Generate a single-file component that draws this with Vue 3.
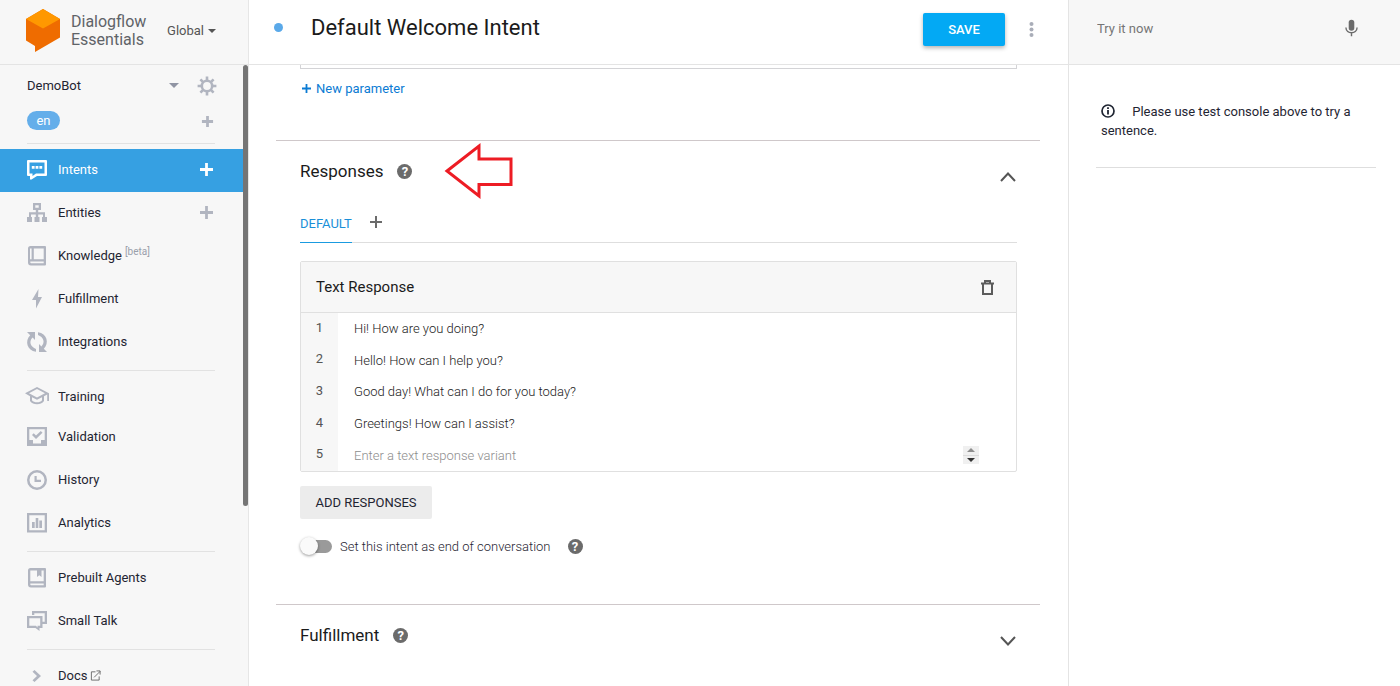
<template>
  <div class="app">
    <aside class="sidebar">
      <header class="brand">
        <svg class="brand-logo" viewBox="0 0 34 43" aria-hidden="true">
          <path d="M17 0 L34 10 V28.500 L9 43 V37 L0 31.500 V10 Z" fill="#ef6c00" />
          <path d="M17 0 L34 10 L17 19.500 L0 10 Z" fill="#ff9800" />
        </svg>
        <div class="brand-name">Dialogflow<br />Essentials</div>
        <button class="region" type="button">
          Global
          <span class="caret"></span>
        </button>
      </header>

      <div class="sidebar-body">
        <div class="agent-row">
          <select v-model="agent" class="agent-select" aria-label="Agent">
            <option>DemoBot</option>
          </select>
          <span class="caret agent-caret"></span>
          <button class="icon-btn" type="button" aria-label="Agent settings">
            <svg class="icon" viewBox="0 0 20 20" fill="none" stroke="currentColor">
              <circle cx="10" cy="10" r="5.200" stroke-width="2.600" />
              <path
                d="M10 4.500V.6M10 15.500v3.900M4.500 10H.6M15.500 10h3.900M6 6 3.400 3.400M14 6l2.600-2.600M6 14l-2.600 2.600M14 14l2.600 2.600"
                stroke-width="2.600"
              />
            </svg>
          </button>
        </div>

        <div class="lang-row">
          <button class="lang" type="button">en</button>
          <button class="icon-btn" type="button" aria-label="Add language">
            <svg class="plus" viewBox="0 0 14 14"><path d="M7 1v12M1 7h12" /></svg>
          </button>
        </div>

        <nav>
          <ul v-for="(group, i) in groups" :key="i" class="nav-group">
            <li
              v-for="item in group"
              :key="item.label"
              class="nav-item"
              :class="{ active: item.label === current, short: item.short }"
            >
              <a href="#" class="nav-link" @click.prevent="current = item.label">
                <svg class="icon" viewBox="0 0 20 20" aria-hidden="true">
                  <path :d="item.icon" fill="currentColor" fill-rule="evenodd" />
                </svg>
                <span>{{ item.label }}<sup v-if="item.tag">{{ item.tag }}</sup></span>
                <svg v-if="item.external" class="external" viewBox="0 0 12 12" aria-hidden="true">
                  <path d="M6 2H1.500v9H10V7M4.500 8 11 1.500M7 1h4v4" />
                </svg>
              </a>
              <button v-if="item.add" class="icon-btn" type="button" :aria-label="`Create ${item.label}`">
                <svg class="plus" viewBox="0 0 14 14"><path d="M7 0v14M0 7h14" /></svg>
              </button>
            </li>
          </ul>
        </nav>
        <div class="scroll-thumb"></div>
      </div>
    </aside>

    <main class="main">
      <header class="intent-header">
        <div class="intent-title">
          <span class="status-dot"></span>
          <input v-model="intentName" class="intent-name" type="text" aria-label="Intent name" />
        </div>
        <button class="save-btn" type="button">SAVE</button>
        <button class="more-btn" type="button" aria-label="More options">
          <svg viewBox="0 0 4 15"><circle cx="2" cy="2" r="2" /><circle cx="2" cy="7.500" r="2" /><circle cx="2" cy="13" r="2" /></svg>
        </button>
      </header>

      <div class="content">
        <section class="parameters">
          <div class="param-table"></div>
          <a href="#" class="new-param" @click.prevent>
            <svg viewBox="0 0 10 10"><path d="M5 0v10M0 5h10" /></svg>
            New parameter
          </a>
        </section>

        <section class="panel responses">
          <div class="panel-head">
            <h2>Responses</h2>
            <span class="help">?</span>
            <svg class="arrow" viewBox="0 0 68 54" aria-hidden="true">
              <path d="M2 27 L34 2 V15 H66 V40.500 H34 V52 Z" />
            </svg>
            <button class="chevron" type="button" aria-label="Collapse responses">
              <svg viewBox="0 0 16 10"><path d="M1 9 8 1.500 15 9" /></svg>
            </button>
          </div>

          <div class="tabs">
            <button class="tab" type="button">DEFAULT</button>
            <button class="add-tab" type="button" aria-label="Add tab">
              <svg viewBox="0 0 12 12"><path d="M6 0v12M0 6h12" /></svg>
            </button>
          </div>

          <div class="card">
            <div class="card-head">
              <h3>Text Response</h3>
              <button class="trash" type="button" aria-label="Delete response">
                <svg viewBox="0 0 13 15"><path d="M2 3.500v10.500h9V3.500M0 3.500h13M4 3V1h5v2" /></svg>
              </button>
            </div>
            <ol class="variants">
              <li v-for="(text, i) in variants" :key="i" class="variant">
                <span class="num">{{ i + 1 }}</span>
                <input
                  v-model="variants[i]"
                  type="text"
                  :aria-label="`Response variant ${i + 1}`"
                  placeholder="Enter a text response variant"
                />
                <span v-if="i === variants.length - 1" class="stepper">
                  <button type="button" aria-label="Scroll up"><span class="tri up"></span></button>
                  <button type="button" aria-label="Scroll down"><span class="tri down"></span></button>
                </span>
              </li>
            </ol>
          </div>

          <button class="add-btn" type="button">ADD RESPONSES</button>

          <div class="end-row">
            <input id="end-toggle" v-model="endOfConversation" class="toggle" type="checkbox" />
            <label for="end-toggle">Set this intent as end of conversation</label>
            <span class="help">?</span>
          </div>
        </section>

        <section class="panel">
          <div class="panel-head">
            <h2>Fulfillment</h2>
            <span class="help">?</span>
            <button class="chevron" type="button" aria-label="Expand fulfillment">
              <svg viewBox="0 0 16 10"><path d="M1 1 8 8.500 15 1" /></svg>
            </button>
          </div>
        </section>
      </div>
    </main>

    <aside class="console">
      <header class="console-header">
        <input v-model="query" type="text" placeholder="Try it now" aria-label="Try it now" />
        <button class="mic" type="button" aria-label="Speak">
          <svg viewBox="0 0 14 18">
            <rect x="4" y="0" width="6" height="12" rx="3" fill="currentColor" />
            <path d="M1 8.500c0 7.400 12 7.400 12 0M7 14v4" fill="none" stroke="currentColor" stroke-width="1.500" />
          </svg>
        </button>
      </header>
      <p class="console-note">
        <svg viewBox="0 0 14 14" aria-hidden="true">
          <circle cx="7" cy="7" r="6" fill="none" stroke="currentColor" stroke-width="1.700" />
          <path d="M7 3.200v1.800M7 6v4.600" stroke="currentColor" stroke-width="1.800" />
        </svg>
        Please use test console above to try a sentence.
      </p>
    </aside>
  </div>
</template>

<script setup>
import { ref } from 'vue'

const agent = ref('DemoBot')
const current = ref('Intents')
const intentName = ref('Default Welcome Intent')
const endOfConversation = ref(false)
const query = ref('')

const variants = ref([
  'Hi! How are you doing?',
  'Hello! How can I help you?',
  'Good day! What can I do for you today?',
  'Greetings! How can I assist?',
  ''
])

const groups = [
  [
    {
      label: 'Intents',
      add: true,
      icon: 'M1 0H19Q20 0 20 1V15Q20 16 19 16H10L4.500 19.500H3V16H1Q0 16 0 15V1Q0 0 1 0ZM2.500 2.500V13.500H5.500V16L9 13.500H17.500V2.500ZM4.800 6H7.600V8.800H4.800ZM8.600 6H11.400V8.800H8.600ZM12.400 6H15.200V8.800H12.400Z'
    },
    {
      label: 'Entities',
      add: true,
      icon: 'M6 0H14V7H11.200V9.200H18V14H20V19H15V14H16V11.500H11.200V14H12.500V19H7.500V14H8.800V11.500H4V14H5V19H0V14H2V9.200H8.800V7H6ZM8.300 2.300V4.700H11.700V2.300Z'
    },
    {
      label: 'Knowledge',
      tag: '[beta]',
      icon: 'M3.500 0H18Q19 0 19 1V18.500Q19 19.500 18 19.500H4Q1 19.500 1 16.500V2.500Q1 0 3.500 0ZM3 2.500V13.300H4.600V2.500ZM6.800 2.500V13.300H16.700V2.500ZM3.300 15.500V16.300Q3.300 17.200 4.200 17.200H16.700V15.500Z'
    },
    { label: 'Fulfillment', icon: 'M11.500 0 5 11H9V19.500L15 8H11Z' },
    {
      label: 'Integrations',
      icon: 'M0 0H8V8L5.600 5.600C1.500 9.500 3.500 15 9 17V19.700C0 18.500-2.500 9 3.200 3.200ZM11 .3C20 1.500 22.500 11 16.800 16.800L20 20H12V12L14.400 14.400C18.500 10.500 16.500 5 11 3Z'
    }
  ],
  [
    {
      label: 'Training',
      short: true,
      icon: 'M10 1 22 7.300V15H20.200V8.500L17 10.200V15C14 19.300 6 19.300 3 15V10.200L-2 7.300ZM10 3 2 7.300 10 11.500 18 7.300ZM5 11.200V14.300C7 17 13 17 15 14.300V11.200L10 13.700Z'
    },
    {
      label: 'Validation',
      icon: 'M0 0H20V19H0ZM2.300 2.300V13H6V16.500H14V13H17.700V2.300ZM5 8 6.700 6.300 9 8.600 13.800 4 15.500 5.700 9 12Z'
    },
    {
      label: 'History',
      icon: 'M10 0A10 10 0 1 1 10 20A10 10 0 1 1 10 0ZM10 2.500A7.500 7.500 0 1 0 10 17.500A7.500 7.500 0 1 0 10 2.500ZM7.500 6H9.700V9.800H14V12H7.500Z'
    },
    {
      label: 'Analytics',
      icon: 'M0 0H20V19.500H0ZM2.300 2.300V17.200H17.700V2.300ZM5 9H7.700V15H5ZM8.700 5H11.300V15H8.700ZM12.300 7.500H15V15H12.300Z'
    }
  ],
  [
    {
      label: 'Prebuilt Agents',
      icon: 'M3.500 0H18Q19 0 19 1V18.500Q19 19.500 18 19.500H4Q1 19.500 1 16.500V2.500Q1 0 3.500 0ZM3.300 2.500V13.300H16.700V2.500H14.500V9L12.300 7.300 10 9V2.500ZM3.300 15.500V16.300Q3.300 17.200 4.200 17.200H16.700V15.500Z'
    },
    {
      label: 'Small Talk',
      icon: 'M5 0H20V13H15.500V10.700H17.700V2.300H7.300V4H5ZM0 5H15.500V17H12.500V20L8.500 17H0ZM2.300 7.300V14.700H9L10.500 16.500V14.700H13.200V7.300Z'
    }
  ],
  [
    {
      label: 'Docs',
      external: true,
      icon: 'M5.500 5.800 7.500 4 14 10 7.500 16 5.500 14.200 10 10Z'
    }
  ]
]
</script>

<style>
body {
  margin: 0;
  background: #fff;
}
</style>

<style scoped>
.app {
  display: flex;
  height: 100vh;
  overflow: hidden;
  font-family: Roboto, 'Liberation Sans', sans-serif;
  font-size: 13px;
  color: #1f2532;
}

.app * {
  box-sizing: border-box;
}

button,
input,
select {
  margin: 0;
  padding: 0;
  border: 0;
  outline: 0;
  background: none;
  font: inherit;
  color: inherit;
}

button {
  cursor: pointer;
}

svg {
  display: block;
  flex: none;
  overflow: visible;
}

a {
  color: inherit;
  text-decoration: none;
}

h2,
h3 {
  margin: 0;
  font-weight: 400;
}

/* sidebar */
.sidebar {
  display: flex;
  flex-direction: column;
  flex: 0 0 249px;
  border-right: 1px solid #e6e6e6;
  background: #f7f7f7;
}

.brand {
  display: flex;
  align-items: center;
  flex: none;
  height: 65px;
  padding: 0 32px 3px 26px;
  border-bottom: 1px solid #e4e4e4;
}

.brand-logo {
  width: 34px;
  height: 43px;
}

.brand-name {
  flex: 1;
  margin-left: 11px;
  font-size: 16px;
  line-height: 18px;
  color: #5f6368;
}

.region {
  display: flex;
  align-items: center;
  gap: 4px;
  color: #555;
}

.caret {
  border: 4px solid transparent;
  border-top-color: #555;
  border-bottom: 0;
}

.sidebar-body {
  position: relative;
  flex: 1;
  min-height: 0;
  padding-top: 2px;
  overflow: hidden;
}

.scroll-thumb {
  position: absolute;
  top: 0;
  right: 0;
  width: 5px;
  height: 71%;
  border-radius: 3px;
  background: #757575;
}

.agent-row,
.lang-row {
  display: flex;
  align-items: center;
  height: 37px;
  padding: 0 31px 0 27px;
}

.agent-select {
  flex: 1;
  appearance: none;
}

.agent-caret {
  margin-right: 18px;
  border-width: 5px;
  border-bottom: 0;
  border-top-color: #9094a3;
}

.icon-btn {
  display: flex;
  justify-content: center;
  width: 20px;
  color: #b1b5c0;
}

.icon {
  width: 20px;
  height: 20px;
}

.plus {
  width: 13px;
  height: 13px;
  fill: none;
  stroke: currentColor;
  stroke-width: 3;
}

.lang-row {
  justify-content: space-between;
  height: 39px;
  padding-bottom: 4px;
}

.lang {
  width: 33px;
  height: 19px;
  margin-bottom: 2px;
  border-radius: 10px;
  background: #64aeea;
  color: #fff;
}

.nav-group {
  margin: 0;
  padding: 0;
  list-style: none;
}

.nav-group::before {
  content: '';
  display: block;
  margin: 6px 33px 5px 27px;
  border-top: 1px solid #e2e2e2;
}

.nav-group:first-child::before {
  margin-top: 0;
}

.nav-item {
  display: flex;
  align-items: center;
  height: 43px;
  padding: 0 32px 2px 27px;
}

.nav-item.short {
  height: 40px;
  padding-bottom: 0;
}

.nav-item.active {
  background: #36a0e2;
  color: #fff;
}

.nav-link {
  display: flex;
  align-items: center;
  flex: 1;
}

.nav-link .icon {
  margin-right: 11px;
  color: #b1b5c0;
}

.active .icon,
.active .icon-btn {
  color: #fff;
}

sup {
  margin-left: 3px;
  font-size: 10px;
  line-height: 1;
  color: #9aa0ab;
}

.external {
  width: 11px;
  height: 11px;
  margin-left: 3px;
  fill: none;
  stroke: #666;
}

/* intent editor */
.main {
  display: flex;
  flex-direction: column;
  flex: 1;
  min-width: 0;
}

.intent-header {
  display: flex;
  align-items: center;
  flex: none;
  height: 65px;
  padding: 0 34px 6px 25px;
  border-bottom: 1px solid #e4e4e4;
}

.intent-title {
  display: flex;
  align-items: center;
  flex: 1;
  min-width: 0;
  padding-bottom: 4px;
}

.status-dot {
  width: 9px;
  height: 9px;
  border-radius: 50%;
  background: #5aa9e9;
}

.intent-name {
  flex: 1;
  min-width: 0;
  margin-left: 28px;
  font-size: 22px;
  color: #1b1b1b;
}

.save-btn {
  width: 82px;
  height: 33px;
  border-radius: 2px;
  background: #03a9f4;
  box-shadow: 0 2px 4px rgba(0, 0, 0, 0.3);
  color: #fff;
  font-weight: 500;
}

.more-btn {
  margin-left: 24px;
}

.more-btn svg {
  width: 5px;
  height: 15px;
  fill: #a9adb8;
}

.content {
  flex: 1;
  min-height: 0;
  padding: 0 28px 0 27px;
  overflow: hidden;
}

.parameters {
  padding: 0 23px 33px 24px;
}

.param-table {
  height: 4px;
  border: 1px solid #d3d3d6;
  border-top: 0;
}

.new-param {
  display: inline-flex;
  align-items: center;
  gap: 5px;
  height: 38px;
  padding-left: 2px;
  color: #0b7bd3;
}

.new-param svg {
  width: 9px;
  height: 9px;
  fill: none;
  stroke: currentColor;
  stroke-width: 2;
}

.panel {
  padding: 0 23px 0 24px;
  border-top: 1px solid #cfc8ca;
}

.responses {
  padding-bottom: 48px;
}

.panel-head {
  display: flex;
  align-items: center;
  height: 60px;
}

h2 {
  font-size: 17px;
  color: #1b1b1b;
}

.help {
  display: flex;
  align-items: center;
  justify-content: center;
  width: 15px;
  height: 15px;
  margin-left: 14px;
  border-radius: 50%;
  background: #6b6b6b;
  color: #fff;
  font-size: 13px;
  font-weight: 700;
}

.arrow {
  width: 68px;
  height: 54px;
  margin-left: 33px;
  fill: none;
  stroke: #ed1c24;
  stroke-width: 3;
}

.chevron {
  margin-right: 1px;
  margin-left: auto;
  padding-top: 12px;
}

.chevron svg {
  width: 16px;
  height: 10px;
  fill: none;
  stroke: #555;
  stroke-width: 2;
}

.tabs {
  display: flex;
  height: 42px;
  border-bottom: 1px solid #dedede;
}

.tab {
  height: 42px;
  padding-top: 4px;
  border-bottom: 1px solid #1a9be0;
  color: #1a8fd8;
}

.add-tab {
  margin-left: 18px;
}

.add-tab svg {
  width: 12px;
  height: 12px;
  fill: none;
  stroke: #6b6b6b;
  stroke-width: 2;
}

.card {
  margin-top: 18px;
  border: 1px solid #e0e0e0;
  border-radius: 2px;
}

.card-head {
  display: flex;
  align-items: center;
  justify-content: space-between;
  height: 51px;
  padding: 0 22px 0 15px;
  border-bottom: 1px solid #e0e0e0;
  background: #f7f7f7;
}

h3 {
  font-size: 15px;
  color: #1b1b1b;
}

.trash svg {
  width: 13px;
  height: 15px;
  fill: none;
  stroke: #5c5c5c;
  stroke-width: 2;
}

.variants {
  display: grid;
  grid-auto-rows: 1fr;
  min-height: 158px;
  margin: 0;
  padding: 0;
  list-style: none;
}

.variant {
  display: flex;
  align-items: stretch;
  padding-right: 37px;
}

.num {
  display: flex;
  align-items: center;
  justify-content: center;
  width: 37px;
  padding-bottom: 3px;
  background: #f7f7f7;
  color: #555;
}

.variant input {
  flex: 1;
  min-width: 0;
  margin-left: 16px;
  font-weight: 300;
  color: #222;
}

.variant input::placeholder {
  color: #8d8d8d;
  opacity: 1;
}

.stepper {
  display: flex;
  flex-direction: column;
  align-self: center;
  width: 16px;
  height: 18px;
  background: #f0f0f0;
}

.stepper button {
  display: flex;
  align-items: center;
  justify-content: center;
  flex: 1;
}

.stepper button + button {
  border-top: 1px solid #dcdcdc;
}

.tri {
  border: 4px solid transparent;
}

.tri.up {
  border-top: 0;
  border-bottom-color: #8e8e8e;
}

.tri.down {
  border-bottom: 0;
  border-top-color: #333;
}

.add-btn {
  display: block;
  width: 132px;
  height: 33px;
  margin-top: 14px;
  border-radius: 2px;
  background: #ececec;
}

.end-row {
  display: flex;
  align-items: center;
  margin-top: 17px;
  font-weight: 300;
}

.end-row label {
  margin-left: 8px;
}

.end-row .help {
  margin-left: 17px;
}

.toggle {
  position: relative;
  width: 32px;
  height: 20px;
  appearance: none;
  cursor: pointer;
}

.toggle::before {
  content: '';
  position: absolute;
  inset: 4px 0 3px 4px;
  border-radius: 7px;
  background: #9a9a9a;
}

.toggle::after {
  content: '';
  position: absolute;
  top: 1px;
  left: 0;
  width: 18px;
  height: 18px;
  border-radius: 50%;
  background: #fafafa;
  box-shadow: 0 1px 3px rgba(0, 0, 0, 0.4);
}

.toggle:checked::after {
  left: 14px;
}

/* test console */
.console {
  flex: 0 0 332px;
  border-left: 1px solid #e4e4e4;
}

.console-header {
  display: flex;
  align-items: center;
  height: 65px;
  padding: 0 42px 8px 28px;
  border-bottom: 1px solid #e4e4e4;
  background: #f7f7f7;
}

.console-header input {
  flex: 1;
  min-width: 0;
}

.console-header input::placeholder {
  color: #757575;
  opacity: 1;
}

.mic {
  color: #6b6b6b;
}

.mic svg {
  width: 13px;
  height: 18px;
}

.console-note {
  margin: 0 24px 0 27px;
  padding: 37px 5px 27px;
  border-bottom: 1px solid #dedede;
  line-height: 19px;
}

.console-note svg {
  display: inline-block;
  width: 14px;
  height: 14px;
  margin-right: 14px;
  vertical-align: -2px;
}
</style>
